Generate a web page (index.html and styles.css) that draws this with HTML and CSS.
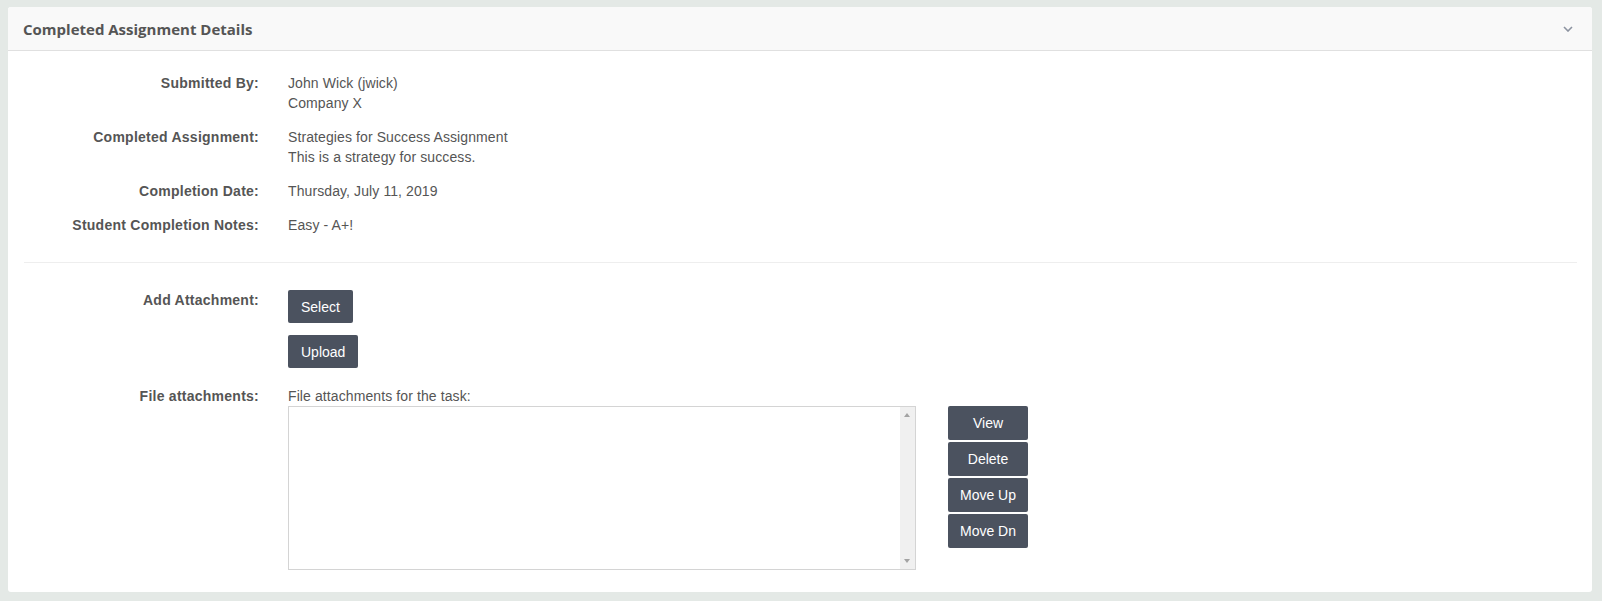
FILE: index.html
```html
<!DOCTYPE html>
<html lang="en">
<head>
  <meta charset="UTF-8" />
  <title>Completed Assignment Details</title>
  <link rel="stylesheet" href="styles.css">
</head>
<body>

  <div class="page">
    <div class="card">

      <!-- Header -->
      <div class="card-header">
        <div class="card-title">Completed Assignment Details</div>
        <svg class="chevron" width="10" height="6" viewBox="0 0 10 6">
          <polyline points="1,1 5,5 9,1" fill="none" stroke="#8c93a0" stroke-width="1.6"/>
        </svg>
      </div>

      <div class="card-body">

        <!-- Details -->
        <div class="form-row">
          <div class="label">Submitted By:</div>
          <div class="value">John Wick (jwick)<br>Company X</div>
        </div>
        <div class="form-row">
          <div class="label">Completed Assignment:</div>
          <div class="value">Strategies for Success Assignment<br>This is a strategy for success.</div>
        </div>
        <div class="form-row">
          <div class="label">Completion Date:</div>
          <div class="value">Thursday, July 11, 2019</div>
        </div>
        <div class="form-row">
          <div class="label">Student Completion Notes:</div>
          <div class="value">Easy - A+!</div>
        </div>

        <div class="divider"></div>

        <!-- Attachments -->
        <div class="form-row">
          <div class="label">Add Attachment:</div>
          <div class="value button-stack">
            <button class="btn">Select</button>
            <button class="btn">Upload</button>
          </div>
        </div>

        <div class="form-row files-row">
          <div class="label">File attachments:</div>
          <div class="value">
            <div>File attachments for the task:</div>
            <div class="files">
              <div class="listbox">
                <div class="list-items"></div>
                <div class="scrollbar">
                  <span class="arrow-up"></span>
                  <span class="arrow-down"></span>
                </div>
              </div>
              <div class="file-actions">
                <button class="btn btn-action">View</button>
                <button class="btn btn-action">Delete</button>
                <button class="btn btn-action">Move Up</button>
                <button class="btn btn-action">Move Dn</button>
              </div>
            </div>
          </div>
        </div>

      </div>
    </div>
  </div>

</body>
</html>
```

FILE: styles.css
```css
body {
  margin: 0;
  padding: 0;
  background-color: #e4e9e6;
  font-family: "Liberation Sans", Arial, sans-serif;
  font-size: 14px;
  line-height: 20px;
  color: #555;
}

.page {
  padding: 7px 10px 9px 8px;
}

.card {
  background-color: #fff;
  border-radius: 3px;
  overflow: hidden;
}

.card-header {
  display: flex;
  align-items: center;
  justify-content: space-between;
  height: 43px;
  padding: 0 19px 0 15px;
  background-color: #f9f9f9;
  border-bottom: 1px solid #e0e0e0;
}

.card-title {
  font-family: "Open Sans", sans-serif;
  font-weight: bold;
  font-size: 15px;
  color: #555;
}

.chevron {
  display: block;
}

.card-body {
  padding: 22px 15px 22px 16px;
}

.form-row {
  display: grid;
  grid-template-columns: 235px 1fr;
  column-gap: 29px;
  margin-bottom: 14px;
}

.label {
  text-align: right;
  font-weight: bold;
  letter-spacing: 0.25px;
  color: #555;
}

.value {
  letter-spacing: 0.1px;
}

.divider {
  height: 1px;
  background-color: #eee;
  margin: 27px 0 27px;
}

.button-stack {
  display: flex;
  flex-direction: column;
  align-items: flex-start;
  gap: 12px;
  margin-bottom: 4px;
}

.btn {
  height: 33px;
  padding: 0 13px;
  background-color: #4b525f;
  color: #fff;
  border: none;
  border-radius: 2px;
  font-family: "Liberation Sans", Arial, sans-serif;
  font-size: 14px;
  cursor: pointer;
}

.files-row {
  margin-bottom: 0;
}

.files {
  display: flex;
  align-items: flex-start;
  gap: 32px;
}

.listbox {
  display: flex;
  width: 626px;
  height: 162px;
  border: 1px solid #d4d4d4;
}

.list-items {
  flex: 1;
}

.scrollbar {
  position: relative;
  width: 15px;
  background-color: #f0f0f0;
}

.arrow-up,
.arrow-down {
  position: absolute;
  left: 4px;
  width: 0;
  height: 0;
  border-left: 3.5px solid transparent;
  border-right: 3.5px solid transparent;
}

.arrow-up {
  top: 6px;
  border-bottom: 4px solid #a3a3a3;
}

.arrow-down {
  bottom: 6px;
  border-top: 4px solid #a3a3a3;
}

.file-actions {
  display: flex;
  flex-direction: column;
  gap: 2px;
}

.btn-action {
  width: 80px;
  height: 34px;
  padding: 0;
}
```
